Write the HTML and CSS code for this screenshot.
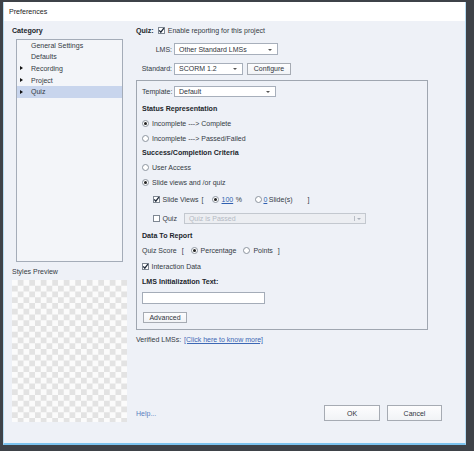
FILE: index.html
```html
<!DOCTYPE html>
<html>
<head>
<meta charset="utf-8">
<link rel="stylesheet" href="styles.css">
</head>
<body>
<div class="dialog">
  <div class="titlebar">Preferences</div>
  <div class="content">
    <div class="side">
      <div class="heading">Category</div>
      <ul class="tree">
        <li class="tree-item"><span class="slot"></span>General Settings</li>
        <li class="tree-item"><span class="slot"></span>Defaults</li>
        <li class="tree-item"><span class="slot"><span class="tri"></span></span>Recording</li>
        <li class="tree-item"><span class="slot"><span class="tri"></span></span>Project</li>
        <li class="tree-item selected"><span class="slot"><span class="tri"></span></span>Quiz</li>
      </ul>
      <div class="preview-label">Styles Preview</div>
      <div class="preview"></div>
    </div>
    <div class="main">
      <div class="quiz-line">
        <span class="heading">Quiz:</span>
        <span class="check on quiz-check"><svg viewBox="0 0 7 7" width="7" height="7"><path d="M1.2 3.4 L2.8 5.2 L5.9 1.2" fill="none" stroke="#1f2a3a" stroke-width="1.3"/></svg></span>
        <span>Enable reporting for this project</span>
      </div>
      <div class="field-row">
        <span class="field-label">LMS:</span>
        <span class="select lms-select">Other Standard LMSs<span class="caret"></span></span>
      </div>
      <div class="field-row">
        <span class="field-label">Standard:</span>
        <span class="select std-select">SCORM 1.2<span class="caret"></span></span>
        <span class="btn configure">Configure</span>
      </div>
      <div class="group">
        <div class="row template-row">
          <span class="tmpl-label">Template:</span>
          <span class="select tmpl-select">Default<span class="caret"></span></span>
        </div>
        <div class="row sec h-first">Status Representation</div>
        <div class="row opt"><span class="radio on"></span>Incomplete ---&gt; Complete</div>
        <div class="row opt"><span class="radio"></span>Incomplete ---&gt; Passed/Failed</div>
        <div class="row sec h-std">Success/Completion Criteria</div>
        <div class="row opt"><span class="radio"></span>User Access</div>
        <div class="row opt"><span class="radio on"></span>Slide views and /or quiz</div>
        <div class="row slide-row">
          <span class="check on"><svg viewBox="0 0 7 7" width="7" height="7"><path d="M1.2 3.4 L2.8 5.2 L5.9 1.2" fill="none" stroke="#1f2a3a" stroke-width="1.3"/></svg></span>
          <span>Slide Views</span>
          <span class="br-open">[</span>
          <span class="radio on pct-radio"></span><span class="num">100</span><span class="pct">%</span>
          <span class="radio slides-radio"></span><span class="num">0</span><span class="slides-text">Slide(s)</span>
          <span class="br-close">]</span>
        </div>
        <div class="row quiz-row">
          <span class="check"></span>
          <span>Quiz</span>
          <span class="select disabled quiz-select">Quiz is Passed<span class="sep"></span><span class="caret"></span></span>
        </div>
        <div class="row sec h-data">Data To Report</div>
        <div class="row score-row">
          <span>Quiz Score</span>
          <span class="score-open">[</span>
          <span class="radio on score-radio"></span><span>Percentage</span>
          <span class="radio points-radio"></span><span>Points</span>
          <span class="score-close">]</span>
        </div>
        <div class="row interaction-row">
          <span class="check on"><svg viewBox="0 0 7 7" width="7" height="7"><path d="M1.2 3.4 L2.8 5.2 L5.9 1.2" fill="none" stroke="#1f2a3a" stroke-width="1.3"/></svg></span>
          <span>Interaction Data</span>
        </div>
        <div class="row sec h-init">LMS Initialization Text:</div>
        <div class="textbox"></div>
        <div class="btn advanced">Advanced</div>
      </div>
      <div class="verified">Verified LMSs: <span class="link">[Click here to know more]</span></div>
      <div class="footer">
        <span class="help">Help...</span>
        <span class="btn ok">OK</span>
        <span class="btn cancel">Cancel</span>
      </div>
    </div>
  </div>
</div>
</body>
</html>
```
FILE: styles.css
```css
* { box-sizing: border-box; }
html, body { margin: 0; padding: 0; }
body {
  width: 474px;
  height: 451px;
  overflow: hidden;
  background: #3e4248;
  font-family: "Liberation Sans", Arial, sans-serif;
  font-size: 7px;
  color: #343a44;
}
.dialog {
  margin: 2px 0 0 3px;
  width: 463px;
  height: 443px;
  background: #eef1f7;
  border-left: 1px solid #b7dcf2;
  border-right: 1px solid #b7dcf2;
  border-bottom: 2px solid #7cc3ee;
  display: flex;
  flex-direction: column;
}
.titlebar {
  height: 19px;
  background: #ffffff;
  padding-left: 5px;
  line-height: 20px;
  font-size: 7.1px;
  color: #1d1d1d;
}
.content { flex: 1; display: flex; }
.side {
  width: 132px;
  padding: 5px 0 0 8px;
  display: flex;
  flex-direction: column;
}
.heading {
  font-weight: bold;
  font-size: 7.1px;
  line-height: 10px;
  height: 10px;
  color: #22262c;
}
.tree {
  margin: 3px 0 0 4px;
  padding: 0;
  width: 107px;
  height: 223px;
  border: 1px solid #a4acb8;
  background: #f3f5f9;
  list-style: none;
}
.tree-item {
  height: 11.6px;
  display: flex;
  align-items: center;
  padding-bottom: 1px;
}
.tree-item.selected { background: #c8d5ed; }
.slot {
  width: 14px;
  padding-left: 3px;
  display: flex;
  align-items: center;
}
.tri {
  width: 0;
  height: 0;
  border-top: 2.5px solid transparent;
  border-bottom: 2.5px solid transparent;
  border-left: 3.5px solid #111;
}
.preview-label { margin-top: 4.5px; line-height: 10px; height: 10px; }
.preview {
  margin-top: 3px;
  width: 115px;
  height: 142px;
  background: conic-gradient(#e3e3e3 25%, #fbfbfb 0 50%, #e3e3e3 0 75%, #fbfbfb 0) 0 0 / 11.5px 11.5px;
}
.main {
  flex: 1;
  display: flex;
  flex-direction: column;
  padding-top: 4.5px;
}
.quiz-line { display: flex; align-items: center; height: 10px; }
.quiz-check { margin: 0 3px 0 4px; }
.check {
  width: 7px;
  height: 7px;
  border: 1px solid #7e8792;
  background: #fff;
  display: inline-flex;
  align-items: center;
  justify-content: center;
  flex: none;
  overflow: visible;
}
.check svg { flex: none; }
.radio {
  width: 7px;
  height: 7px;
  border: 1px solid #8c949e;
  border-radius: 50%;
  background: #fff;
  display: inline-flex;
  align-items: center;
  justify-content: center;
  margin-right: 3px;
  flex: none;
}
.radio.on::after {
  content: "";
  width: 3px;
  height: 3px;
  border-radius: 50%;
  background: #222;
}
.field-row { display: flex; align-items: center; height: 12px; margin-top: 7.5px; }
.field-label { width: 38px; text-align: right; padding-right: 2px; }
.select {
  height: 12px;
  border: 1px solid #a7afbb;
  background: #fff;
  display: flex;
  align-items: center;
  padding-left: 4px;
  position: relative;
  color: #2f343c;
}
.caret {
  position: absolute;
  right: 5px;
  top: 4.5px;
  width: 0;
  height: 0;
  border-left: 2px solid transparent;
  border-right: 2px solid transparent;
  border-top: 2.5px solid #555;
}
.lms-select { width: 104px; }
.std-select { width: 69px; }
.btn {
  display: flex;
  align-items: center;
  justify-content: center;
  border: 1px solid #a6abb3;
  background: linear-gradient(#fdfdfe, #f1f3f6);
  color: #2f343c;
}
.configure { margin-left: 4px; width: 44px; height: 12px; }
.group {
  margin-top: 5.5px;
  width: 292px;
  height: 249.5px;
  border: 1px solid #9fa6b0;
  padding: 5px 0 0 5px;
}
.row { display: flex; align-items: center; }
.template-row { height: 11px; }
.tmpl-label { width: 32px; }
.tmpl-select { width: 102px; height: 11px; }
.tmpl-select .caret { top: 4px; }
.sec { font-weight: bold; font-size: 7.1px; color: #22262c; }
.h-first { margin-top: 4.6px; height: 14.75px; }
.h-std { height: 14.75px; }
.opt { height: 14.75px; }
.slide-row { height: 18px; padding-left: 11px; }
.slide-row .check { margin-right: 2.5px; }
.br-open { margin-left: 3px; }
.pct-radio { margin-left: 8px; margin-right: 3px; }
.num { color: #2f5fb0; text-decoration: underline; }
.pct { margin-left: 2.5px; }
.slides-radio { margin-left: 13px; margin-right: 1.5px; }
.slides-text { margin-left: 1.5px; }
.br-close { margin-left: 15px; }
.quiz-row { height: 21px; padding-left: 11px; }
.quiz-row .check { margin-right: 2.5px; }
.quiz-select {
  margin-left: 7px;
  width: 182px;
  height: 10.5px;
}
.select.disabled {
  background: #eceef2;
  border-color: #c3c8cf;
  color: #b4bac4;
}
.sep {
  position: absolute;
  right: 10px;
  top: 2px;
  height: 5px;
  border-left: 1px solid #b9bec6;
}
.disabled .caret { top: 4px; border-top-color: #aab0ba; right: 4px; }
.h-data { height: 14px; }
.score-row { height: 15.5px; }
.score-open { margin-left: 5px; margin-right: 7px; }
.points-radio { margin-left: 7px; }
.score-close { margin-left: 5px; }
.interaction-row { height: 15px; }
.interaction-row .check { margin-right: 2.5px; }
.h-init { height: 16px; }
.textbox {
  margin-top: 2px;
  width: 123px;
  height: 12px;
  border: 1px solid #a4acb8;
  background: #fff;
}
.advanced { margin: 8px 0 0 1px; width: 44px; height: 11px; }
.verified { margin-top: 5.4px; line-height: 10px; height: 10px; }
.link { color: #3d68b5; text-decoration: underline; margin-left: 1px; }
.footer {
  margin-top: auto;
  display: flex;
  align-items: center;
  padding: 0 23px 22px 0;
}
.help { color: #5a80c0; flex: 1; padding-top: 1px; }
.ok { width: 56px; height: 16px; }
.cancel { width: 55px; height: 16px; margin-left: 7px; }
```
